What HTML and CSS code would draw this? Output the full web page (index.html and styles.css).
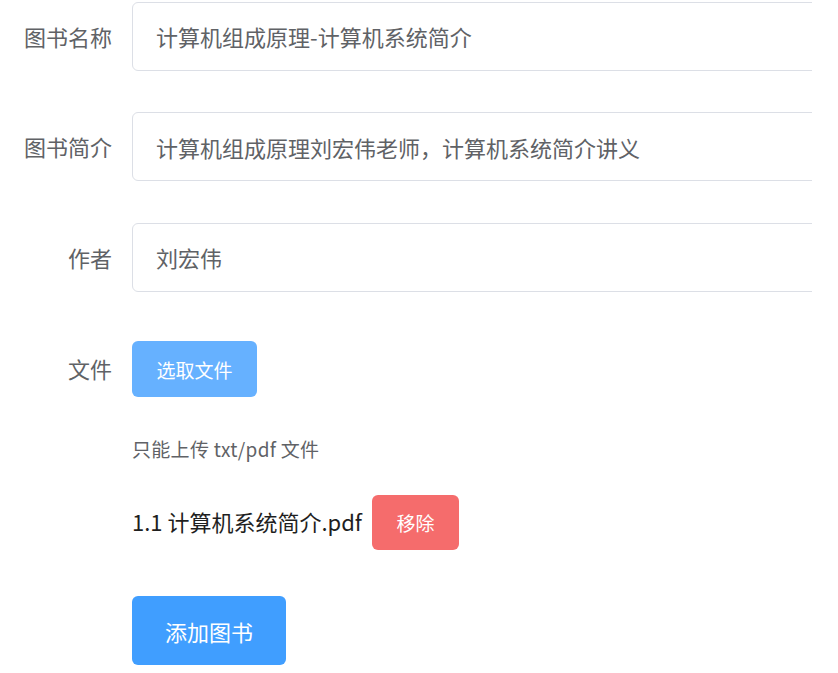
FILE: index.html
```html
<!DOCTYPE html>
<html lang="zh-CN">
<head>
<meta charset="utf-8">
<title>添加图书</title>
<link rel="stylesheet" href="styles.css">
</head>
<body>
<div class="page">
  <form class="form">
    <div class="item">
      <label class="label">图书名称</label>
      <div class="content"><input class="input" type="text" value="计算机组成原理-计算机系统简介"></div>
    </div>
    <div class="item">
      <label class="label">图书简介</label>
      <div class="content"><input class="input" type="text" value="计算机组成原理刘宏伟老师，计算机系统简介讲义"></div>
    </div>
    <div class="item">
      <label class="label">作者</label>
      <div class="content"><input class="input" type="text" value="刘宏伟"></div>
    </div>
    <div class="item item-file">
      <label class="label label-file">文件</label>
      <div class="content">
        <button type="button" class="btn btn-select">选取文件</button>
        <div class="tip">只能上传 txt/pdf 文件</div>
        <div class="file-row">
          <span class="file-name">1.1 计算机系统简介.pdf</span>
          <button type="button" class="btn btn-remove">移除</button>
        </div>
      </div>
    </div>
    <div class="item item-submit">
      <span class="label"></span>
      <div class="content"><button type="button" class="btn btn-primary">添加图书</button></div>
    </div>
  </form>
</div>
</body>
</html>
```
FILE: styles.css
```css
html, body {
  margin: 0;
  padding: 0;
  background: #ffffff;
}
body {
  font-family: "Noto Sans CJK SC", "Noto Sans", sans-serif;
  color: #606266;
}
.page {
  width: 812px;
  overflow: hidden;
  padding-top: 1.5px;
}
.form {
  display: flex;
  flex-direction: column;
}
.item {
  display: flex;
  align-items: flex-start;
  margin-bottom: 41.5px;
}
.label {
  box-sizing: border-box;
  flex: 0 0 132px;
  padding-right: 20px;
  text-align: right;
  font-size: 22px;
  line-height: 69px;
  color: #606266;
}
.content {
  flex: 1;
  min-width: 0;
}
.input {
  display: block;
  box-sizing: border-box;
  width: calc(100% + 30px);
  height: 69px;
  margin: 0;
  padding: 0 23px;
  border: 1px solid #dcdfe6;
  border-radius: 6px;
  font-family: inherit;
  font-size: 22px;
  color: #606266;
  background: #fff;
  outline: none;
}
.item-file {
  margin-bottom: 0;
}
.label-file {
  line-height: 56px;
  margin-top: 7px;
}
.btn {
  display: inline-flex;
  align-items: center;
  justify-content: center;
  border: none;
  border-radius: 6px;
  color: #fff;
  font-family: inherit;
  padding: 0;
  cursor: pointer;
}
.btn-select {
  margin-top: 8px;
  width: 125px;
  height: 56px;
  background: #66b1ff;
  font-size: 19px;
}
.tip {
  margin-top: 38px;
  font-size: 19px;
  letter-spacing: 0.3px;
  line-height: 27px;
  color: #606266;
}
.file-row {
  display: flex;
  align-items: center;
  gap: 10px;
  margin-top: 33px;
}
.file-name {
  font-size: 22px;
  color: #1f1f1f;
  line-height: 30px;
  margin-top: -3px;
}
.btn-remove {
  width: 87px;
  height: 55px;
  background: #f56c6c;
  font-size: 19px;
}
.item-submit {
  margin-top: 46px;
  margin-bottom: 0;
}
.btn-primary {
  width: 154px;
  height: 69px;
  background: #409eff;
  font-size: 22px;
}
```
